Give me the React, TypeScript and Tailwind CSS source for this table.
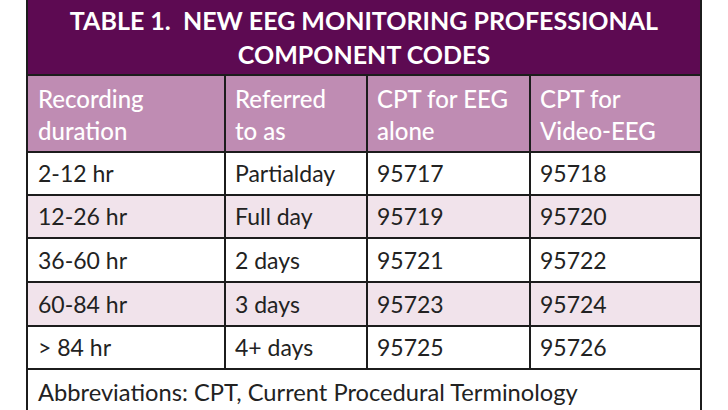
const rows = [
  ["2-12 hr", "Partialday", "95717", "95718"],
  ["12-26 hr", "Full day", "95719", "95720"],
  ["36-60 hr", "2 days", "95721", "95722"],
  ["60-84 hr", "3 days", "95723", "95724"],
  ["> 84 hr", "4+ days", "95725", "95726"],
];

const rowHeights = ["h-[41px]", "h-[41px]", "h-[42px]", "h-[42px]", "h-[41px]"];

const cols = "grid grid-cols-[196px_142px_163px_171px]";

const App = () => {
  return (
    <div className="h-[410px] w-[728px] overflow-hidden bg-white font-['Lato',sans-serif] text-[#222]">
      <div className="ml-[26px] w-[676px] border-x-2 border-[#1c1c1c]">
        <div className="flex h-[74px] flex-col items-center justify-center bg-[#5d0a52] text-[25px] font-bold leading-[34px] text-white">
          <div>TABLE 1.&nbsp; NEW EEG MONITORING PROFESSIONAL</div>
          <div>COMPONENT CODES</div>
        </div>

        <div className={`${cols} h-[79px] border-y-2 border-[#1c1c1c] bg-[#bf8cb3] text-[24px] font-medium leading-[32px] text-white`}>
          <div className="px-[10px] pt-[7px]">
            Recording
            <br />
            duration
          </div>
          <div className="border-l-2 border-[#1c1c1c] px-[9px] pt-[7px]">
            Referred
            <br />
            to as
          </div>
          <div className="border-l-2 border-[#1c1c1c] px-[9px] pt-[7px]">
            CPT for EEG
            <br />
            alone
          </div>
          <div className="border-l-2 border-[#1c1c1c] px-[9px] pt-[7px]">
            CPT for
            <br />
            Video-EEG
          </div>
        </div>

        {rows.map((r, i) => (
          <div
            key={r[0]}
            className={`${cols} ${rowHeights[i]} box-content border-b-2 border-[#1c1c1c] text-[23px] ${
              i % 2 === 1 ? "bg-[#f1e3eb]" : "bg-white"
            }`}
          >
            <div className="flex items-center px-[10px]">{r[0]}</div>
            <div className="flex items-center border-l-2 border-[#1c1c1c] px-[9px]">{r[1]}</div>
            <div className="flex items-center border-l-2 border-[#1c1c1c] px-[9px]">{r[2]}</div>
            <div className="flex items-center border-l-2 border-[#1c1c1c] px-[9px]">{r[3]}</div>
          </div>
        ))}

        <div className="h-[60px] px-[10px] pt-[5px] text-[23.7px]">
          Abbreviations: CPT, Current Procedural Terminology
        </div>
      </div>
    </div>
  );
};

export default App;
